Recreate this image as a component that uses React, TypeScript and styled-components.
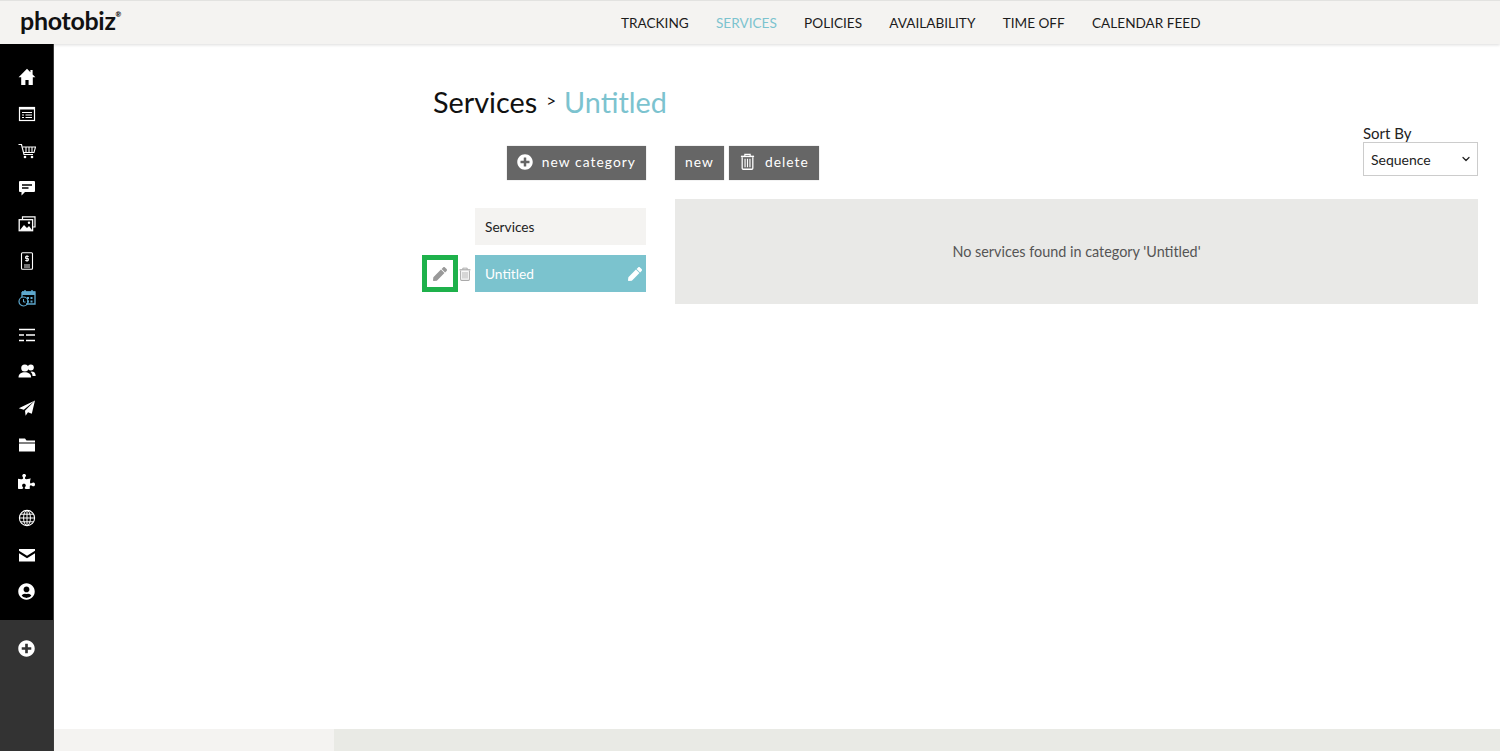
import styled, { createGlobalStyle } from 'styled-components';
import { FaPlusCircle, FaPen, FaPuzzlePiece, FaUserCircle } from 'react-icons/fa';
import { ChevronDown } from 'lucide-react';
import { ReactNode } from 'react';

const GlobalStyle = createGlobalStyle`
    html, body {
        margin: 0;
        padding: 0;
        height: 100%;
        background: #fff;
        font-family: Lato, "Open Sans", sans-serif;
        overflow: hidden;
    }
    * { box-sizing: border-box; }
`

const Page = styled.div`
    display: grid;
    grid-template-rows: 44px 1fr;
    height: 751px;
    width: 1500px;
`

const TopBar = styled.header`
    display: flex;
    align-items: center;
    background: #f4f3f1;
    border-top: 1px solid #e2e2e0;
    box-shadow: 0 1px 3px rgba(0, 0, 0, 0.14);
    padding-left: 20px;
    position: relative;
    z-index: 2;
`

const Logo = styled.div`
    font-family: Lato, sans-serif;
    font-weight: 700;
    font-size: 25px;
    line-height: 28px;
    letter-spacing: -0.3px;
    color: #111;
    width: 581px;
    margin-top: -5px;

    sup {
        font-size: 7px;
        line-height: 0;
        vertical-align: 13px;
        font-weight: 900;
    }
`

const Nav = styled.nav`
    display: flex;
    gap: 27.3px;
    padding-left: 20px;
`

const NavItem = styled.a<{ $active?: boolean }>`
    font-size: 13.6px;
    line-height: 18px;
    color: ${({ $active }) => ($active ? '#7cc3cf' : '#1c1c1c')};
    cursor: pointer;
`

const Body = styled.div`
    display: grid;
    grid-template-columns: 54px 1fr;
    min-height: 0;
`

const Sidebar = styled.aside`
    display: flex;
    flex-direction: column;
    background: #000;
    border-right: 1px solid #3a3a3a;
`

const SideList = styled.div`
    height: 576px;
    padding-top: 15px;
`

const SideExtra = styled.div`
    flex: 1;
    background: #333;
    padding-top: 10px;
`

const SideIcon = styled.div<{ $color?: string }>`
    height: 36.75px;
    display: flex;
    align-items: center;
    justify-content: center;
    color: ${({ $color }) => $color || '#fff'};
    font-size: 17px;
`

const Main = styled.main`
    display: flex;
    flex-direction: column;
    min-width: 0;
`

const Content = styled.div`
    flex: 1;
    padding: 41px 22px 0 368px;
`

const Title = styled.h1`
    margin: 0 0 0 11px;
    font-size: 28.8px;
    line-height: 34px;
    font-weight: 400;
    color: #111;
    display: flex;
    align-items: center;
    height: 34px;
`

const Crumb = styled.span`
    font-size: 17px;
    margin: 0 8px 3px 9px;
`

const TitleAccent = styled.span`
    color: #7cc3cf;
`

const Columns = styled.div`
    display: grid;
    grid-template-columns: 224px 1fr;
    column-gap: 29px;
    margin-top: -4px;
`

const LeftCol = styled.div`
    display: flex;
    flex-direction: column;
`

const RightCol = styled.div`
    display: flex;
    flex-direction: column;
`

const ToolRow = styled.div<{ $end?: boolean; $below: number }>`
    display: flex;
    align-items: flex-end;
    justify-content: ${({ $end }) => ($end ? 'flex-end' : 'space-between')};
    height: 65px;
    margin-bottom: ${({ $below }) => $below}px;
`

const Buttons = styled.div`
    display: flex;
    gap: 5px;
`

const Button = styled.button`
    display: flex;
    align-items: center;
    gap: 9px;
    height: 34px;
    padding: 0 10px 3px;
    border: 0;
    background: #666;
    color: #fff;
    font-family: Lato, sans-serif;
    font-size: 13.8px;
    letter-spacing: 1.05px;
    box-shadow: 0 0 1px rgba(0, 0, 0, 0.3);
    cursor: pointer;

    svg { font-size: 16px; }
`

const SortBox = styled.div`
    display: flex;
    flex-direction: column;
    margin-bottom: 4px;
`

const SortLabel = styled.label`
    font-size: 15px;
    line-height: 17px;
    color: #222;
`

const Select = styled.div`
    display: flex;
    align-items: center;
    justify-content: space-between;
    width: 115px;
    height: 34px;
    padding: 0 5px 0 7px;
    border: 1px solid #ccc;
    background: #fff;
    font-size: 14px;
    color: #222;
`

const CategoryRow = styled.div`
    display: flex;
    align-items: center;
    height: 37px;
    margin-bottom: 10px;
`

const RowTools = styled.div`
    width: 53px;
    display: flex;
    align-items: center;
`

const EditBox = styled.div<{ $marked?: boolean }>`
    width: 36px;
    height: 37px;
    display: flex;
    align-items: center;
    justify-content: center;
    border: ${({ $marked }) => ($marked ? '5px solid #1eb14b' : '0')};
    color: #999;
    font-size: 14px;
`

const TrashTool = styled.div`
    display: flex;
    color: #aaa;
`

const Category = styled.div<{ $selected?: boolean }>`
    flex: 1;
    height: 37px;
    display: flex;
    align-items: center;
    justify-content: space-between;
    padding: 0 4px 0 10px;
    font-size: 13.7px;
    background: ${({ $selected }) => ($selected ? '#7bc3ce' : '#f4f3f1')};
    color: ${({ $selected }) => ($selected ? '#fff' : '#222')};

    svg { font-size: 14px; }
`

const EmptyPanel = styled.div`
    height: 105px;
    display: flex;
    align-items: center;
    justify-content: center;
    background: #e9e9e7;
    color: #555;
    font-size: 14.4px;
`

const Footer = styled.footer`
    height: 22px;
    display: grid;
    grid-template-columns: 280px 1fr;
`

const FooterLeft = styled.div`
    background: #f4f3f1;
`

const FooterRight = styled.div`
    background: #e9eae5;
`

const Svg = ({ children }: { children: ReactNode }) => (
    <svg width="18" height="18" viewBox="0 0 18 18" fill="none" stroke="currentColor">
        {children}
    </svg>
)

const Filled = ({ d }: { d: string }) => <path d={d} fill="currentColor" stroke="none" />

const HomeIcon = () => (
    <Svg>
        <Filled d="M9 0.8 0.6 9.200H3.200V17H7.400V12H10.600V17H14.800V9.200H17.400L14.600 6.400V2H12.400V4.200Z" />
    </Svg>
)

const WindowIcon = () => (
    <Svg>
        <rect x="1.5" y="2.5" width="15" height="13" strokeWidth="1.2" />
        <path d="M1 3.500h16" strokeWidth="2" />
        <path d="M4 7.500h10M4 10h2M7.500 10H14M4 12.500h2M7.500 12.500H14" strokeWidth="1" />
    </Svg>
)

const CartIcon = () => (
    <Svg>
        <path d="M0.500 2.500h3l2.500 10h9" strokeWidth="1.2" />
        <path d="M4.500 5h13l-1.500 5.500H6M8 5v5.500M11 5v5.500M14 5v5.500" strokeWidth="1.1" />
        <circle cx="7" cy="15" r="1.3" fill="currentColor" stroke="none" />
        <circle cx="14" cy="15" r="1.3" fill="currentColor" stroke="none" />
    </Svg>
)

const CommentIcon = () => (
    <Svg>
        <Filled d="M2 2h14a1 1 0 0 1 1 1v9a1 1 0 0 1-1 1H7l-3.500 3.500V13H2a1 1 0 0 1-1-1V3a1 1 0 0 1 1-1z" />
        <path d="M4 6h10M4 9h6.500" stroke="#000" strokeWidth="1.4" />
    </Svg>
)

const PhotosIcon = () => (
    <Svg>
        <path d="M4.500 4V1.800h12.500V12h-2" strokeWidth="1.2" />
        <rect x="1.2" y="4.7" width="13.4" height="11" strokeWidth="1.3" />
        <Filled d="M2 15l4-5 3 3 2-2 3 4z" />
        <circle cx="11" cy="7.800" r="1.2" fill="currentColor" stroke="none" />
    </Svg>
)

const InvoiceIcon = () => (
    <Svg>
        <rect x="3.500" y="0.800" width="11" height="16.400" rx="1" strokeWidth="1.1" />
        <path d="M6 13h6M6 15h6" strokeWidth="0.9" />
        <path d="M10.800 4.400H7.600v2.100h2.800v2.100H7.200M9 3.200v6.600" strokeWidth="1" />
    </Svg>
)

const CalendarIcon = () => (
    <Svg>
        <path d="M4 3h13v12H8M4 3v5" strokeWidth="1.3" />
        <Filled d="M4 2.500h13V6H4z" />
        <path d="M7 1v3M14 1v3" strokeWidth="1.4" />
        <Filled d="M9 8h2v2H9zM12.500 8h2v2h-2zM12.500 11.500h2v2h-2zM9 11.500h2v2H9z" />
        <circle cx="5.500" cy="12.500" r="4.500" strokeWidth="1.2" />
        <path d="M5.500 10v3h2" strokeWidth="1" />
    </Svg>
)

const ListIcon = () => (
    <Svg>
        <path d="M1 3.500h16M1 9h5M8 9h9M1 14.500h5M8 14.500h9" strokeWidth="1.6" />
    </Svg>
)

const UsersIcon = () => (
    <Svg>
        <circle cx="6.800" cy="6" r="3.600" fill="currentColor" stroke="none" />
        <Filled d="M0.500 15.500c0-3.800 2.800-5.200 6.300-5.200s6.300 1.400 6.300 5.200z" />
        <circle cx="12.800" cy="5.500" r="3" fill="currentColor" stroke="none" />
        <Filled d="M13.500 9.500c2.500 0 4.200 1.200 4.200 4.500H14.500c0-1.800-.5-3-2-4z" />
    </Svg>
)

const PlaneIcon = () => (
    <Svg>
        <Filled d="M17 1.500 0.800 9.200 5.800 10.800ZM17 1.500 7 11.800 7.600 16.800 10 13.200 13.800 14.800Z" />
    </Svg>
)

const FolderIcon = () => (
    <Svg>
        <Filled d="M1 2.500h6l1.500 2H17v2H1zM1 7.500h16v8H1z" />
    </Svg>
)

const GlobeIcon = () => (
    <Svg>
        <circle cx="9" cy="9" r="7.600" strokeWidth="1.1" />
        <ellipse cx="9" cy="9" rx="3.400" ry="7.600" strokeWidth="1" />
        <path d="M9 1.400v15.200M1.400 9h15.200M2.500 5.200h13M2.500 12.800h13" strokeWidth="1" />
    </Svg>
)

const EnvelopeIcon = () => (
    <Svg>
        <Filled d="M1 3h16v1.800L9 9.800 1 4.800zM1 7.200l8 5 8-5V15.500H1z" />
    </Svg>
)

const TrashIcon = ({ size = 17 }: { size?: number }) => (
    <svg width={size} height={size} viewBox="0 0 16 16" fill="none" stroke="currentColor">
        <path d="M1.800 3.200h12.400" strokeWidth="1.4" />
        <path d="M5.500 3V1.300h5V3" strokeWidth="1.1" />
        <path d="M3 4v10.300a1 1 0 0 0 1 1h8a1 1 0 0 0 1-1V4" strokeWidth="1.2" />
        <path d="M5.700 5.500v7.800M8 5.500v7.800M10.300 5.500v7.800" strokeWidth="1.1" />
    </svg>
)

const topIcons: ReactNode[] = [
    <HomeIcon />,
    <WindowIcon />,
    <CartIcon />,
    <CommentIcon />,
    <PhotosIcon />,
    <InvoiceIcon />,
    <CalendarIcon />,
    <ListIcon />,
    <UsersIcon />,
    <PlaneIcon />,
    <FolderIcon />,
    <FaPuzzlePiece size={17} />,
    <GlobeIcon />,
    <EnvelopeIcon />,
    <FaUserCircle size={17} />,
]

const navItems = ['TRACKING', 'SERVICES', 'POLICIES', 'AVAILABILITY', 'TIME OFF', 'CALENDAR FEED']

export default function App() {
    return (
        <Page>
            <GlobalStyle />
            <TopBar>
                <Logo>photobiz<sup>®</sup></Logo>
                <Nav>
                    {navItems.map((item) => (
                        <NavItem key={item} $active={item === 'SERVICES'}>{item}</NavItem>
                    ))}
                </Nav>
            </TopBar>
            <Body>
                <Sidebar>
                    <SideList>
                        {topIcons.map((icon, i) => (
                            <SideIcon key={i} $color={i === 6 ? '#5ea9cf' : undefined}>{icon}</SideIcon>
                        ))}
                    </SideList>
                    <SideExtra>
                        <SideIcon><FaPlusCircle size={17} /></SideIcon>
                    </SideExtra>
                </Sidebar>
                <Main>
                    <Content>
                        <Title>
                            Services<Crumb>&gt;</Crumb><TitleAccent>Untitled</TitleAccent>
                        </Title>
                        <Columns>
                            <LeftCol>
                                <ToolRow $end $below={28}>
                                    <Button><FaPlusCircle />new category</Button>
                                </ToolRow>
                                <CategoryRow>
                                    <RowTools />
                                    <Category>Services</Category>
                                </CategoryRow>
                                <CategoryRow>
                                    <RowTools>
                                        <EditBox $marked><FaPen /></EditBox>
                                        <TrashTool><TrashIcon size={14} /></TrashTool>
                                    </RowTools>
                                    <Category $selected>Untitled<FaPen /></Category>
                                </CategoryRow>
                            </LeftCol>
                            <RightCol>
                                <ToolRow $below={19}>
                                    <Buttons>
                                        <Button>new</Button>
                                        <Button><TrashIcon />delete</Button>
                                    </Buttons>
                                    <SortBox>
                                        <SortLabel>Sort By</SortLabel>
                                        <Select>Sequence<ChevronDown size={12} strokeWidth={2.5} /></Select>
                                    </SortBox>
                                </ToolRow>
                                <EmptyPanel>No services found in category 'Untitled'</EmptyPanel>
                            </RightCol>
                        </Columns>
                    </Content>
                    <Footer>
                        <FooterLeft />
                        <FooterRight />
                    </Footer>
                </Main>
            </Body>
        </Page>
    )
}
